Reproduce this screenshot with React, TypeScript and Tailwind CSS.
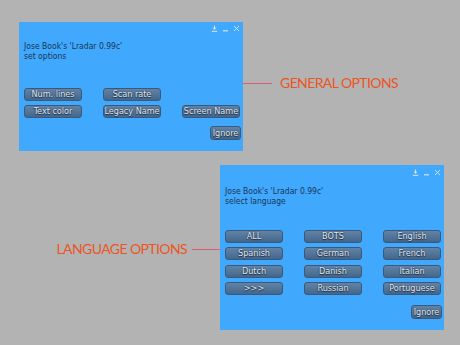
import type { ReactNode } from "react";

const btn =
  "flex h-[13px] items-center justify-center whitespace-nowrap rounded-[3px] border border-[#385a7e] bg-gradient-to-b from-[#6283a5] to-[#43678c] font-['DejaVu_Sans_Condensed','DejaVu_Sans',sans-serif] text-[9px] leading-none text-[#e1e7ee] [text-shadow:0_0_1.5px_#1b2d44,0_1px_1px_#1b2d44]";

function Btn({ children, className = "" }: { children: ReactNode; className?: string }) {
  return <div className={`${btn} ${className}`}>{children}</div>;
}

function TitleIcons() {
  return (
    <div className="flex justify-end gap-[4px] pr-[3px]">
      <svg width="7" height="7" viewBox="0 0 7 7" fill="none" stroke="#d6e6f5" strokeWidth="1">
        <path d="M3.5 0.5v3.5M1.8 2.6l1.7 1.6 1.7-1.6M0.8 6.3h5.4" />
      </svg>
      <svg width="7" height="7" viewBox="0 0 7 7" fill="none" stroke="#d6e6f5" strokeWidth="1.2">
        <path d="M1 5.8h5" />
      </svg>
      <svg width="7" height="7" viewBox="0 0 7 7" fill="none" stroke="#d6e6f5" strokeWidth="0.9">
        <path d="M1 1l5 5M6 1l-5 5" />
      </svg>
    </div>
  );
}

function Panel({
  line2,
  buttons,
  heightClass,
  iconPad,
  textPad,
  ignorePad,
}: {
  line2: string;
  buttons: (string | null)[];
  heightClass: string;
  iconPad: string;
  textPad: string;
  ignorePad: string;
}) {
  return (
    <div className={`flex w-[224px] shrink-0 flex-col bg-[#41a9fd] ${heightClass} ${iconPad}`}>
      <TitleIcons />
      <div
        className={`pl-[5px] font-['DejaVu_Sans_Condensed','DejaVu_Sans',sans-serif] text-[8.5px] leading-[10px] text-[#183556] ${textPad}`}
      >
        <div>Jose Book's 'Lradar 0.99c'</div>
        <div>{line2}</div>
      </div>
      <div className="mt-auto grid grid-cols-[58px_58px_58px] auto-rows-[13px] gap-x-[21px] gap-y-[4.4px] pl-[5px]">
        {buttons.map((b, i) => (b ? <Btn key={i}>{b}</Btn> : <div key={i} />))}
      </div>
      <div className={`flex justify-end pr-[2px] ${ignorePad}`}>
        <Btn className="h-[14px] w-[31px]">Ignore</Btn>
      </div>
    </div>
  );
}

export default function App() {
  return (
    <div className="h-[345px] w-[460px] overflow-hidden bg-[#b3b3b3] font-['DejaVu_Sans',sans-serif]">
      <div className="flex items-start pl-[19px] pt-[22px]">
        <Panel
          line2="set options"
          buttons={["Num. lines", "Scan rate", null, "Text color", "Legacy Name", "Screen Name"]}
          heightClass="h-[129px]"
          iconPad="pt-[3px]"
          textPad="pt-[9px]"
          ignorePad="mt-[8px] mb-[11px]"
        />
        <div className="mt-[54px] flex items-center">
          <div className="h-px w-[29px] bg-[#e05a78]" />
          <div className="ml-[8px] whitespace-nowrap font-['Lato',sans-serif] text-[14px] leading-none tracking-[-0.6px] text-[#ec5523]">
            GENERAL OPTIONS
          </div>
        </div>
      </div>
      <div className="mt-[14px] flex items-start">
        <div className="mt-[77px] flex w-[220px] items-center justify-end">
          <div className="whitespace-nowrap font-['Lato',sans-serif] text-[14px] leading-none tracking-[-0.6px] text-[#ec5523]">
            LANGUAGE OPTIONS
          </div>
          <div className="ml-[5px] h-px w-[28px] bg-[#e05a78]" />
        </div>
        <Panel
          line2="select language"
          buttons={[
            "ALL", "BOTS", "English",
            "Spanish", "German", "French",
            "Dutch", "Danish", "Italian",
            ">>>", "Russian", "Portuguese",
          ]}
          heightClass="h-[165px]"
          iconPad="pt-[4px]"
          textPad="pt-[10px]"
          ignorePad="mt-[10px] mb-[11px]"
        />
      </div>
    </div>
  );
}
